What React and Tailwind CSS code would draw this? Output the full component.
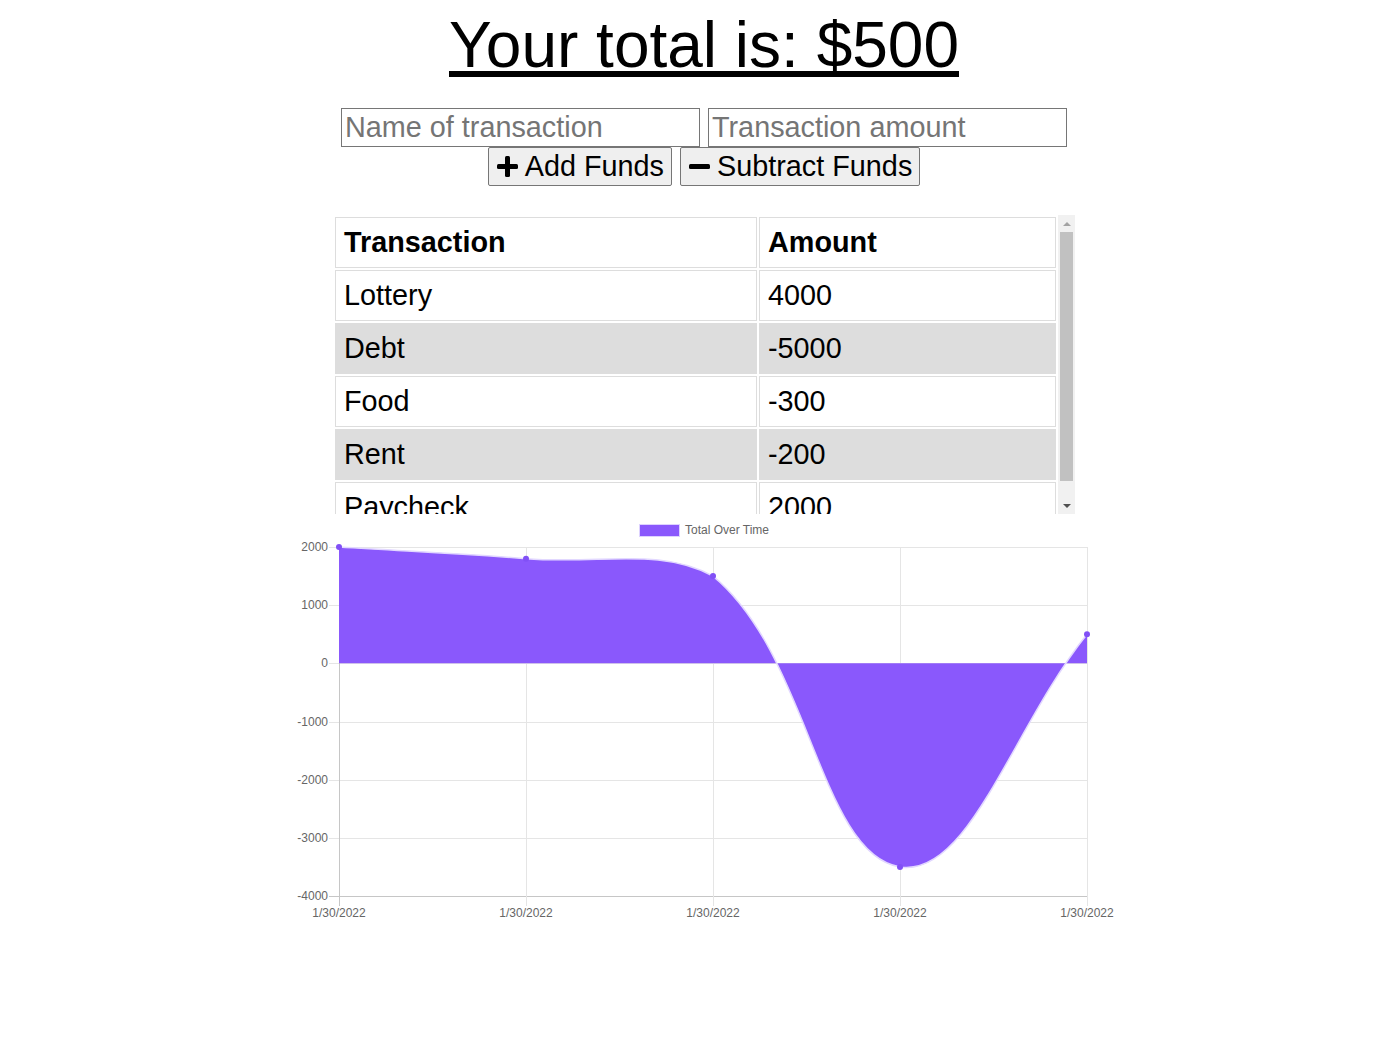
import React from "react";

const rows = [
    { name: "Lottery", amount: "4000" },
    { name: "Debt", amount: "-5000" },
    { name: "Food", amount: "-300" },
    { name: "Rent", amount: "-200" },
    { name: "Paycheck", amount: "2000" },
];

// running totals, oldest first
const totals = [2000, 1800, 1500, -3500, 500];

const area = { left: 339, right: 1087, top: 547, bottom: 896 };
const xAt = (i) => area.left + (i * (area.right - area.left)) / (totals.length - 1);
const yAt = (v) => area.top + ((2000 - v) * (area.bottom - area.top)) / 6000;

function splinePoints(values, t) {
    const pts = values.map((v, i) => ({ x: xAt(i), y: yAt(v) }));
    const cap = (v, lo, hi) => Math.max(Math.min(v, hi), lo);
    return pts.map((cur, i) => {
        const prev = pts[i - 1] || cur;
        const next = pts[i + 1] || cur;
        const d01 = Math.hypot(cur.x - prev.x, cur.y - prev.y);
        const d12 = Math.hypot(next.x - cur.x, next.y - cur.y);
        const s01 = d01 / (d01 + d12) || 0;
        const s12 = d12 / (d01 + d12) || 0;
        const fa = t * s01;
        const fb = t * s12;
        return {
            ...cur,
            cpPrev: {
                x: cap(cur.x - fa * (next.x - prev.x), area.left, area.right),
                y: cap(cur.y - fa * (next.y - prev.y), area.top, area.bottom),
            },
            cpNext: {
                x: cap(cur.x + fb * (next.x - prev.x), area.left, area.right),
                y: cap(cur.y + fb * (next.y - prev.y), area.top, area.bottom),
            },
        };
    });
}

function Chart() {
    const pts = splinePoints(totals, 0.4);
    let line = `M ${pts[0].x} ${pts[0].y}`;
    for (let i = 1; i < pts.length; i++) {
        const a = pts[i - 1];
        const b = pts[i];
        line += ` C ${a.cpNext.x} ${a.cpNext.y} ${b.cpPrev.x} ${b.cpPrev.y} ${b.x} ${b.y}`;
    }
    const zero = yAt(0);
    const fill = `${line} L ${area.right} ${zero} L ${area.left} ${zero} Z`;
    const yTicks = [2000, 1000, 0, -1000, -2000, -3000, -4000];

    return (
        <svg width="836" height="420" viewBox="286 515 836 420" className="mt-[1px] block">
            <rect x="639.5" y="524.5" width="40" height="12" fill="#8a58fc" stroke="#ddd2ff" strokeWidth="1" />
            <text x="685" y="534" fontSize="12" fill="#666" fontFamily="'Liberation Sans', Arial, sans-serif">
                Total Over Time
            </text>

            {yTicks.map((v) => (
                <g key={v}>
                    <line
                        x1="329"
                        x2={area.right}
                        y1={Math.round(yAt(v)) + 0.5}
                        y2={Math.round(yAt(v)) + 0.5}
                        stroke={v === -4000 ? "#c6c6c6" : "#e5e5e5"}
                        strokeWidth="1"
                    />
                    <text
                        x="328"
                        y={yAt(v) + 4}
                        fontSize="12"
                        fill="#666"
                        textAnchor="end"
                        fontFamily="'Liberation Sans', Arial, sans-serif"
                    >
                        {v}
                    </text>
                </g>
            ))}
            {totals.map((_, i) => (
                <g key={i}>
                    <line
                        x1={xAt(i) + 0.5}
                        x2={xAt(i) + 0.5}
                        y1={area.top}
                        y2="906"
                        stroke={i === 0 ? "#c6c6c6" : "#e5e5e5"}
                        strokeWidth="1"
                    />
                    <text
                        x={xAt(i)}
                        y="917"
                        fontSize="12"
                        fill="#666"
                        textAnchor="middle"
                        fontFamily="'Liberation Sans', Arial, sans-serif"
                    >
                        1/30/2022
                    </text>
                </g>
            ))}

            <path d={fill} fill="#8a58fc" />
            <path d={line} fill="none" stroke="#e2d8ff" strokeWidth="1.5" />
            {pts.map((p, i) => (
                <circle key={i} cx={p.x} cy={p.y} r="3" fill="#8150f6" />
            ))}
        </svg>
    );
}

function PlusIcon() {
    return (
        <svg width="21" height="21" viewBox="0 0 21 21" className="shrink-0">
            <rect x="8" y="0" width="5" height="21" rx="1.5" fill="#000" />
            <rect x="0" y="8" width="21" height="5" rx="1.5" fill="#000" />
        </svg>
    );
}

function MinusIcon() {
    return (
        <svg width="21" height="21" viewBox="0 0 21 21" className="shrink-0">
            <rect x="0" y="8" width="21" height="5" rx="1.5" fill="#000" />
        </svg>
    );
}

export default function App() {
    return (
        <div className="min-h-screen bg-white pl-[26px] font-['Liberation_Sans',Arial,sans-serif] text-black">
            <div className="flex flex-col items-center">
                <h1 className="pt-[9px] text-[64px] leading-[73px] underline">Your total is: $500</h1>

                <div className="mt-[26px] flex gap-2">
                    <input
                        type="text"
                        placeholder="Name of transaction"
                        className="h-[39px] w-[359px] border border-[#767676] px-[3px] text-[28.8px] placeholder:text-[#757575] outline-none"
                    />
                    <input
                        type="number"
                        placeholder="Transaction amount"
                        className="h-[39px] w-[359px] border border-[#767676] px-[3px] text-[28.8px] placeholder:text-[#757575] outline-none"
                    />
                </div>
                <div className="flex gap-2">
                    <button className="flex h-[39px] items-center gap-[7px] rounded-[2px] border border-[#767676] bg-[#efefef] pl-[8px] pr-[7px] text-[28.8px]">
                        <PlusIcon />
                        <span>Add Funds</span>
                    </button>
                    <button className="flex h-[39px] items-center gap-[7px] rounded-[2px] border border-[#767676] bg-[#efefef] pl-[8px] pr-[7px] text-[28.8px]">
                        <MinusIcon />
                        <span>Subtract Funds</span>
                    </button>
                </div>

                <div className="mt-[29px] flex h-[299px]">
                    <div className="h-full w-[725px] overflow-hidden">
                        <table className="w-[725px] table-fixed border-separate border-spacing-[2px] text-left text-[28.8px]">
                            <thead>
                                <tr>
                                    <th className="h-[51px] w-[422px] border border-[#dddddd] px-2 font-bold">Transaction</th>
                                    <th className="h-[51px] border border-[#dddddd] px-2 font-bold">Amount</th>
                                </tr>
                            </thead>
                            <tbody>
                                {rows.map((row, i) => (
                                    <tr key={row.name} className={i % 2 === 1 ? "bg-[#dddddd]" : "bg-white"}>
                                        <td className="h-[51px] border border-[#dddddd] px-2">{row.name}</td>
                                        <td className="h-[51px] border border-[#dddddd] px-2">{row.amount}</td>
                                    </tr>
                                ))}
                            </tbody>
                        </table>
                    </div>
                    <div className="flex w-[17px] flex-col bg-[#f1f1f1]">
                        <div className="flex h-[17px] items-center justify-center">
                            <div className="h-0 w-0 border-x-[4px] border-b-[4px] border-x-transparent border-b-[#a3a3a3]" />
                        </div>
                        <div className="flex-1 px-[2px]">
                            <div className="h-[249px] w-full bg-[#c1c1c1]" />
                        </div>
                        <div className="flex h-[17px] items-center justify-center">
                            <div className="h-0 w-0 border-x-[4px] border-t-[4px] border-x-transparent border-t-[#505050]" />
                        </div>
                    </div>
                </div>

                <Chart />
            </div>
        </div>
    );
}
